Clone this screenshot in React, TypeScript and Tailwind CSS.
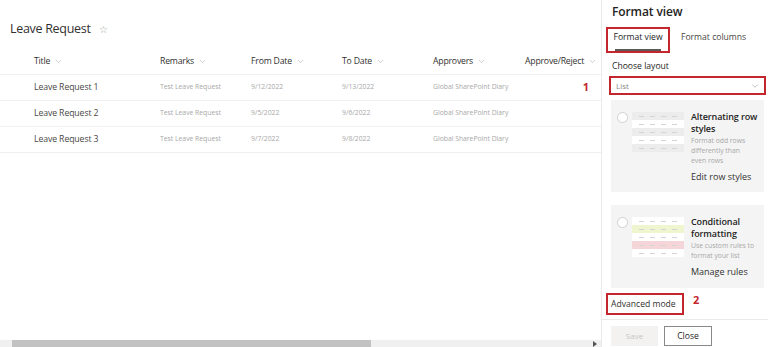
import { ChevronDown } from "lucide-react"

const font = { fontFamily: '"Open Sans", "Noto Sans", sans-serif' }

const columns = [
  { label: "Title", w: "w-[126px]" },
  { label: "Remarks", w: "w-[91px]" },
  { label: "From Date", w: "w-[91px]" },
  { label: "To Date", w: "w-[91px]" },
  { label: "Approvers", w: "w-[92px]" },
  { label: "Approve/Reject", w: "w-[72px]" },
]

const rows = [
  ["Leave Request 1", "Test Leave Request", "9/12/2022", "9/13/2022", "Global SharePoint Diary"],
  ["Leave Request 2", "Test Leave Request", "9/5/2022", "9/6/2022", "Global SharePoint Diary"],
  ["Leave Request 3", "Test Leave Request", "9/7/2022", "9/8/2022", "Global SharePoint Diary"],
]

function Dashes({ bg }: { bg: string }) {
  return (
    <div className={`flex h-[8px] items-center justify-around px-1 ${bg}`}>
      <span className="h-px w-[5px] bg-[#d4d4d4]" />
      <span className="h-px w-[5px] bg-[#d4d4d4]" />
      <span className="h-px w-[5px] bg-[#d4d4d4]" />
      <span className="h-px w-[5px] bg-[#d4d4d4]" />
    </div>
  )
}

function LayoutCard({
  bands,
  title,
  desc,
  action,
  height,
}: {
  bands: string[]
  title: string[]
  desc: string[]
  action: string
  height: string
}) {
  return (
    <div className={`flex bg-[#f4f4f4] pl-[6px] pt-[11px] ${height}`}>
      <div className="mt-[1px] h-[11px] w-[11px] shrink-0 rounded-full border border-[#d0d0d0] bg-white" />
      <div className="ml-[4px] mt-[1px] flex w-[52px] shrink-0 flex-col self-start">
        {bands.map((b, i) => (
          <Dashes key={i} bg={b} />
        ))}
      </div>
      <div className="ml-[7px] flex flex-col whitespace-nowrap">
        {title.map((t) => (
          <div key={t} className="text-[9px] font-semibold leading-[12px] tracking-[-0.1px] text-[#252423]">
            {t}
          </div>
        ))}
        <div className="mt-[1px]">
          {desc.map((d) => (
            <div key={d} className="text-[6.8px] leading-[10px] text-[#a8a8a8]">
              {d}
            </div>
          ))}
        </div>
        <div className="mt-[5px] text-[9px] leading-[12px] text-[#323130]">{action}</div>
      </div>
    </div>
  )
}

export default function App() {
  return (
    <div className="flex h-[347px] w-[768px] overflow-hidden bg-white" style={font}>
      <div className="relative flex w-[601px] shrink-0 flex-col">
        <div className="flex items-center pl-[10px] pt-[21px]">
          <h1 className="text-[12.5px] leading-[16px] tracking-[-0.3px] text-[#323130]">Leave Request</h1>
          <span className="ml-[8px] text-[10px] leading-[16px] text-[#a0a0a0]">☆</span>
        </div>
        <div className="mt-[12px] flex h-[26px] items-center whitespace-nowrap border-b border-[#f0f0f0] pl-[34px]">
          {columns.map((c) => (
            <div key={c.label} className={`flex items-center ${c.w} shrink-0 text-[8.7px] tracking-[-0.2px] text-[#323130]`}>
              {c.label}
              <ChevronDown className="ml-[4px] h-[9px] w-[9px] text-[#a8a8a8]" strokeWidth={1.5} />
            </div>
          ))}
        </div>
        {rows.map((r, i) => (
          <div key={i} className="flex h-[26px] items-center whitespace-nowrap border-b border-[#f0f0f0] pl-[34px]">
            <div className="w-[126px] shrink-0 text-[8.7px] tracking-[-0.1px] text-[#484644]">{r[0]}</div>
            <div className="w-[91px] shrink-0 text-[6.8px] text-[#a8a8a8]">{r[1]}</div>
            <div className="w-[91px] shrink-0 text-[6.8px] text-[#a8a8a8]">{r[2]}</div>
            <div className="w-[91px] shrink-0 text-[6.8px] text-[#a8a8a8]">{r[3]}</div>
            <div className="w-[92px] shrink-0 text-[6.8px] text-[#a8a8a8]">{r[4]}</div>
            <div className="flex flex-1 justify-end pr-[12px]">
              {i === 0 && <span className="text-[11px] font-bold text-[#c4262e]">1</span>}
            </div>
          </div>
        ))}
        <div className="mt-auto flex h-[7px] items-center bg-[#f0f0f0]">
          <div className="ml-[12px] h-[7px] w-[359px] bg-[#c2c2c2]" />
          <div className="ml-auto mr-[4px] h-0 w-0 border-y-[3px] border-l-[4px] border-y-transparent border-l-[#555]" />
        </div>
      </div>

      <div className="flex w-[167px] shrink-0 flex-col border-l border-[#eaeaea]">
        <div className="pl-[10px] pt-[4px] text-[12px] font-semibold leading-[16px] tracking-[-0.1px] text-[#252423]">
          Format view
        </div>
        <div className="mt-[7px] flex items-start whitespace-nowrap pl-[4px]">
          <div className="flex h-[26px] w-[64px] flex-col items-center border-2 border-[#c4262e] pt-[2px]">
            <span className="text-[8.6px] leading-[12px] text-[#252423]">Format view</span>
            <span className="mt-[6px] h-[2px] w-[46px] bg-[#5a5a5a]" />
          </div>
          <span className="ml-[11px] mt-[4px] text-[8.6px] leading-[12px] text-[#484644]">Format columns</span>
        </div>
        <div className="mt-[7px] pl-[10px] text-[8.6px] leading-[12px] text-[#252423]">Choose layout</div>
        <div className="ml-[7px] mr-[2px] mt-[4px] flex h-[19px] items-center justify-between border-2 border-[#c4262e] pl-[5px] pr-[4px]">
          <span className="text-[8px] text-[#8a8886]">List</span>
          <ChevronDown className="h-[10px] w-[10px] text-[#8a8886]" strokeWidth={1.25} />
        </div>
        <div className="ml-[9px] mr-[4px] mt-[5px] flex flex-col gap-[13px]">
          <LayoutCard
            height="h-[92px]"
            bands={["bg-[#ececec]", "bg-white", "bg-[#ececec]", "bg-white", "bg-[#ececec]"]}
            title={["Alternating row", "styles"]}
            desc={["Format odd rows", "differently than", "even rows"]}
            action="Edit row styles"
          />
          <LayoutCard
            height="h-[83px]"
            bands={["bg-white", "bg-[#eef5cf]", "bg-white", "bg-[#f6d5d8]", "bg-white"]}
            title={["Conditional", "formatting"]}
            desc={["Use custom rules to", "format your list"]}
            action="Manage rules"
          />
        </div>
        <div className="mt-[5px] flex items-start pl-[4px]">
          <div className="flex h-[22px] w-[78px] items-center whitespace-nowrap border-2 border-[#c4262e] pl-[3px]">
            <span className="text-[8.6px] leading-[12px] text-[#323130]">Advanced mode</span>
          </div>
          <span className="ml-[9px] text-[11px] font-bold leading-[14px] text-[#c4262e]">2</span>
        </div>
        <div className="mt-[4px] border-t border-[#eaeaea]" />
        <div className="mt-[6px] flex gap-[6px] pl-[9px]">
          <div className="flex h-[20px] w-[47px] items-center justify-center bg-[#f3f2f1] text-[8px] text-[#c8c6c4]">
            Save
          </div>
          <div className="flex h-[20px] w-[48px] items-center justify-center border border-[#8a8886] text-[8.6px] text-[#252423]">
            Close
          </div>
        </div>
      </div>
    </div>
  )
}
